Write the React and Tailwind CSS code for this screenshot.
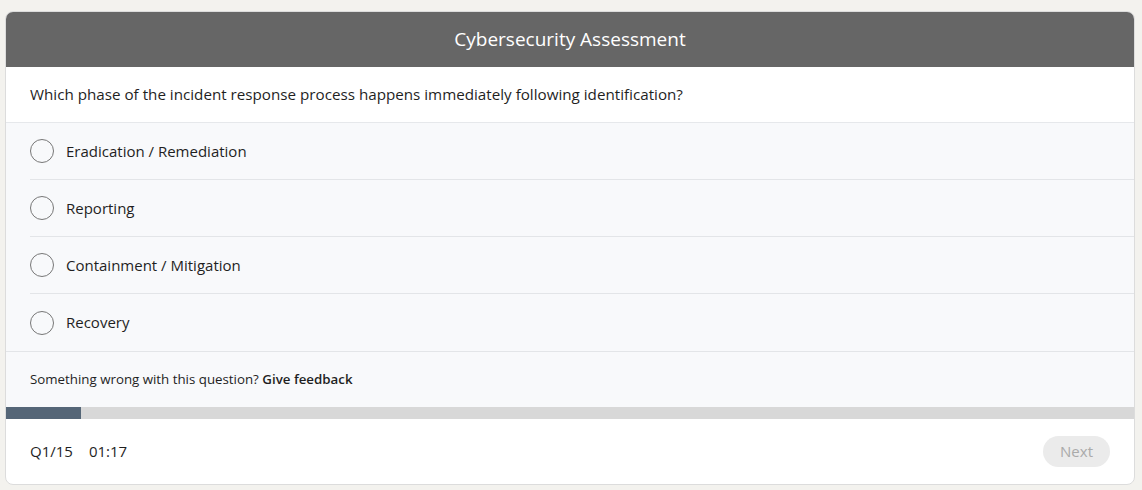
import React, { useState } from "react";

const options = [
  "Eradication / Remediation",
  "Reporting",
  "Containment / Mitigation",
  "Recovery",
];

const App = () => {
  const [selected, setSelected] = useState(null);
  const total = 15;
  const current = 1;

  return (
    <div
      className="min-h-screen bg-[#f3f2ee] pt-[11px] pl-[5px] pr-[7px] pb-[4px]"
      style={{ fontFamily: '"Segoe UI", "Open Sans", sans-serif' }}
    >
      <div className="rounded-[8px] border border-[#dcdcdc] bg-white overflow-hidden">
        <div className="h-[55px] bg-[#666666] flex items-center justify-center">
          <h1 className="text-[19px] text-white">Cybersecurity Assessment</h1>
        </div>

        <div className="h-[56px] flex items-center px-[24px] border-b border-[#e6e8eb]">
          <p className="text-[15.2px] text-[#1f1f1f]">
            Which phase of the incident response process happens immediately following identification?
          </p>
        </div>

        <div className="bg-[#f8f9fb]">
          <div className="pl-[24px] border-b border-[#e3e5e8]">
            {options.map((opt, i) => (
              <button
                key={opt}
                onClick={() => setSelected(i)}
                className={
                  "w-full h-[57px] flex items-center gap-[12px] text-left" +
                  (i < options.length - 1 ? " border-b border-[#e3e5e8]" : "")
                }
              >
                <span className="w-[24px] h-[24px] rounded-full border-[1.5px] border-[#777777] flex items-center justify-center shrink-0">
                  {selected === i && (
                    <span className="w-[12px] h-[12px] rounded-full bg-[#556677]" />
                  )}
                </span>
                <span className="text-[15px] text-[#1f1f1f]">{opt}</span>
              </button>
            ))}
          </div>

          <div className="h-[55px] flex items-center px-[24px]">
            <p className="text-[13.3px] text-[#1f1f1f]">
              Something wrong with this question?{" "}
              <span className="font-semibold">Give feedback</span>
            </p>
          </div>
        </div>

        <div className="h-[12px] bg-[#d8d8d8]">
          <div
            className="h-full bg-[#556677]"
            style={{ width: `${(current / total) * 100}%` }}
          />
        </div>

        <div className="h-[65px] flex items-center justify-between px-[24px]">
          <div className="flex items-center gap-[16px] text-[15px] text-[#1f1f1f]">
            <span>Q{current}/{total}</span>
            <span>01:17</span>
          </div>
          <button
            disabled
            className="h-[31px] px-[17px] rounded-full bg-[#ebebeb] text-[15px] text-[#aaaaaa]"
          >
            Next
          </button>
        </div>
      </div>
    </div>
  );
};

export default App;
